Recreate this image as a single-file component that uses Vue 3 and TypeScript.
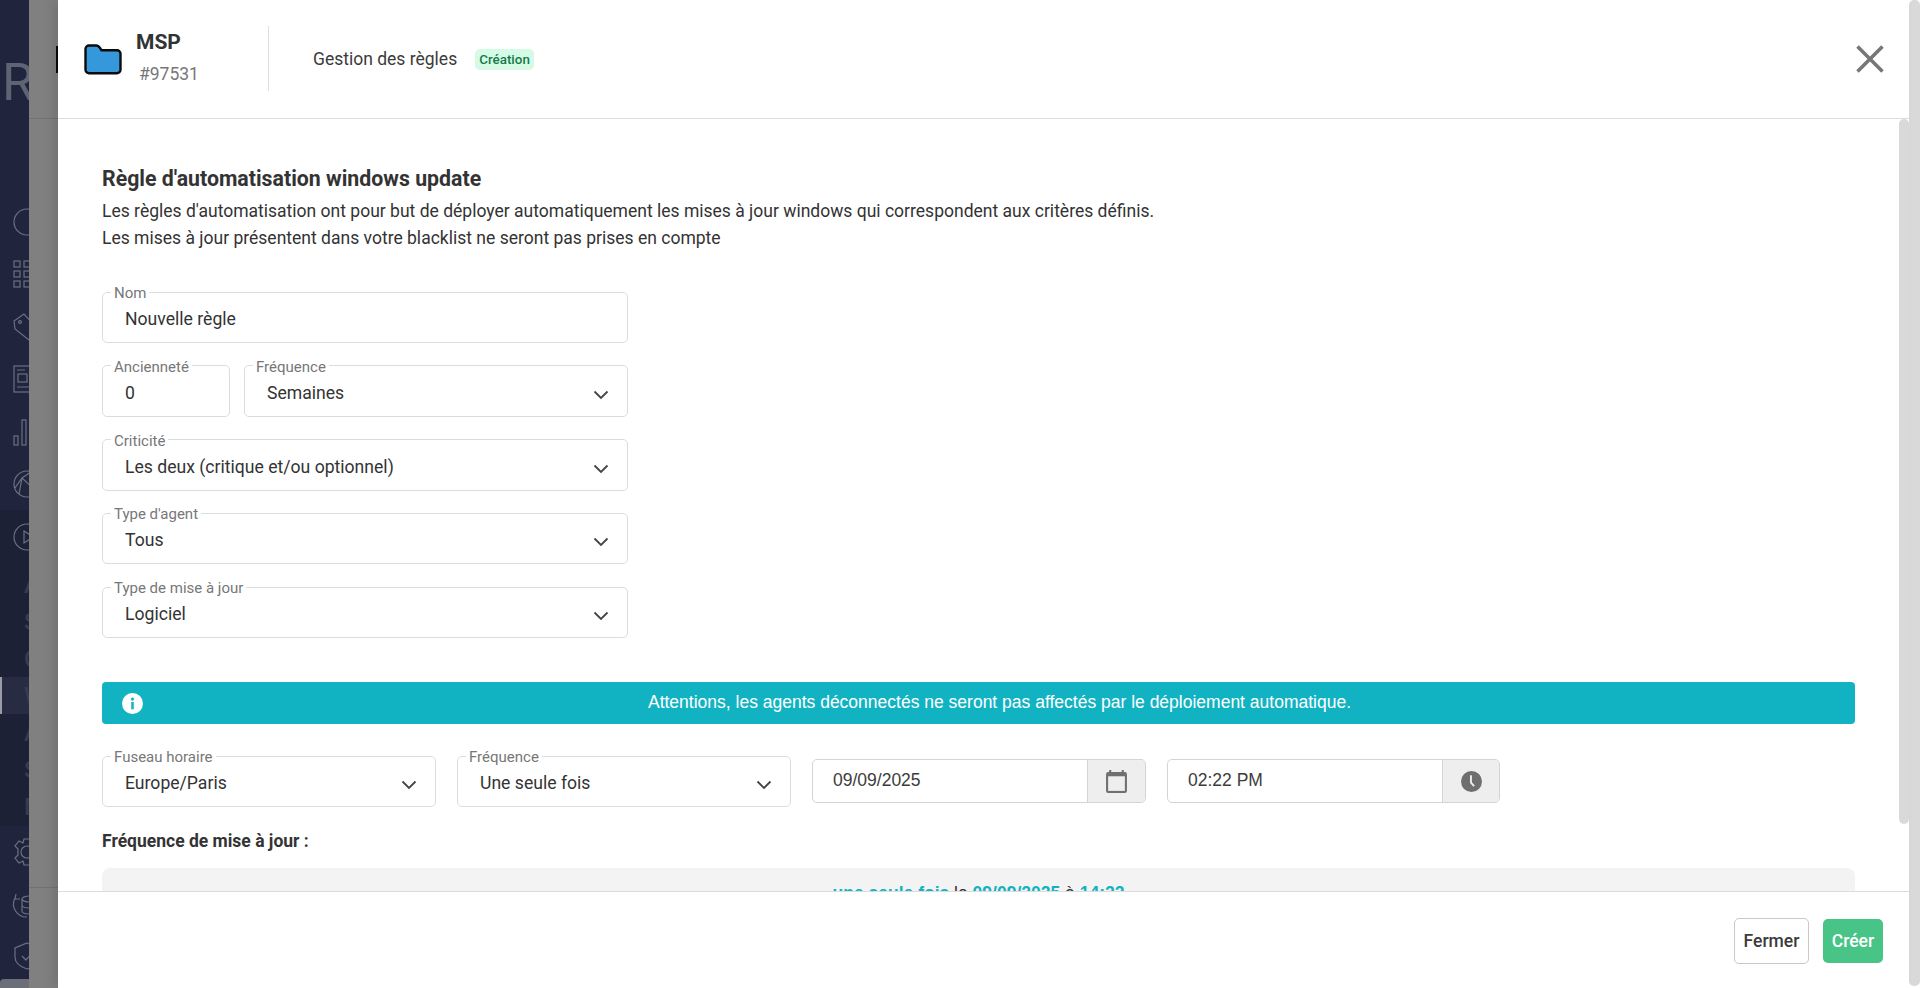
<script setup lang="ts">
interface Field {
  label: string
  value: string
  select: boolean
}

const stacked: Field[] = [
  { label: 'Criticité', value: 'Les deux (critique et/ou optionnel)', select: true },
  { label: "Type d'agent", value: 'Tous', select: true },
  { label: 'Type de mise à jour', value: 'Logiciel', select: true },
]

const sideLetters = ['A', 'S', 'C', 'W', 'A', 'S', 'M']
</script>

<template>
  <div class="screen">
    <aside class="side">
      <div class="logo">R</div>
      <div class="top-group">
        <svg class="ico" viewBox="0 0 28 28"><circle cx="14" cy="14" r="13" /></svg>
        <svg class="ico" viewBox="0 0 28 28">
          <rect x="1" y="1" width="6" height="6" /><rect x="11" y="1" width="6" height="6" /><rect x="21" y="1" width="6" height="6" />
          <rect x="1" y="11" width="6" height="6" /><rect x="11" y="11" width="6" height="6" /><rect x="21" y="11" width="6" height="6" />
          <rect x="1" y="21" width="6" height="6" /><rect x="11" y="21" width="6" height="6" /><rect x="21" y="21" width="6" height="6" />
        </svg>
        <svg class="ico" viewBox="0 0 28 28"><path d="M1 8 L11 1 L27 18 L16 27 L2 16 Z" /><circle cx="7" cy="9" r="1.4" /></svg>
        <svg class="ico" viewBox="0 0 28 28"><rect x="1" y="1" width="26" height="26" /><path d="M4 5h8M4 22h20" /><rect x="5" y="9" width="9" height="8" /></svg>
        <svg class="ico" viewBox="0 0 28 28"><rect x="1" y="18" width="4" height="9" /><rect x="9" y="2" width="4" height="25" /><rect x="17" y="12" width="4" height="15" /></svg>
        <svg class="ico" viewBox="0 0 28 28"><circle cx="14" cy="14" r="13" /><path d="M2 18 L9 8 L18 2 M9 8 L24 22 M9 8 L6 24" /></svg>
      </div>
      <div class="mid-group">
        <svg class="ico play" viewBox="0 0 28 28"><circle cx="14" cy="14" r="13" /><path d="M11 8 L20 14 L11 20 Z" /></svg>
        <div v-for="(letter, i) in sideLetters" :key="i" class="side-item" :class="{ active: i === 3 }">
          <span>{{ letter }}</span>
        </div>
      </div>
      <div class="bottom-group">
        <svg class="ico" viewBox="0 0 28 28"><path d="M11 1 h6 l1 4 4-2 4 5-3 3 v6 l3 3-4 5-4-2-1 4 h-6 l-1-4-4 2-4-5 3-3 v-6 l-3-3 4-5 4 2 Z" /><circle cx="14" cy="14" r="6" /></svg>
        <svg class="ico" viewBox="0 0 28 28"><path d="M2 8 A13 13 0 0 0 14 27 M3 4 L2 9 L7 9" /><ellipse cx="17" cy="9" rx="8" ry="3" /><path d="M9 9v12c0 4 16 4 16 0V9M9 15c0 4 16 4 16 0" /></svg>
        <svg class="ico" viewBox="0 0 28 28"><path d="M14 1 L26 6 V15 C26 21 20 25 14 27 C8 25 2 21 2 15 V6 Z" /><path d="M9 14 L13 18 L20 10" /></svg>
      </div>
      <div class="side-pill"></div>
    </aside>

    <div class="overlay">
      <span class="ghost-line top"></span>
      <span class="ghost-line bottom"></span>
      <span class="ghost-mark"></span>
    </div>

    <section class="modal">
      <header class="modal-head">
        <div class="identity">
          <svg class="folder" viewBox="0 0 38 32">
            <path d="M1.5 6 a3.5 3.5 0 0 1 3.5-3.5 h7.5 c2 0 2.5 1 3.5 2.5 l1.5 2.2 h15.5 a3.5 3.5 0 0 1 3.5 3.5 v16 a3.5 3.5 0 0 1-3.5 3.5 h-28 a3.5 3.5 0 0 1-3.5-3.5 Z" fill="#3498db" stroke="#0a0a0a" stroke-width="2.4" stroke-linejoin="round" />
          </svg>
          <div class="names">
            <div class="name">MSP</div>
            <div class="ref">#97531</div>
          </div>
        </div>
        <div class="crumb">
          <span>Gestion des règles</span>
          <span class="badge">Création</span>
        </div>
        <button class="close" aria-label="Fermer">
          <svg viewBox="0 0 28 28" width="28" height="28"><path d="M1.5 1.5 L26.5 26.5 M26.5 1.5 L1.5 26.5" /></svg>
        </button>
      </header>

      <div class="modal-main">
        <div class="content">
          <div class="content-inner">
            <h2 class="title">Règle d'automatisation windows update</h2>
            <p class="desc">Les règles d'automatisation ont pour but de déployer automatiquement les mises à jour windows qui correspondent aux critères définis.<br />Les mises à jour présentent dans votre blacklist ne seront pas prises en compte</p>

            <div class="form-col">
              <fieldset class="field">
                <legend>Nom</legend>
                <span class="val">Nouvelle règle</span>
              </fieldset>

              <div class="pair">
                <fieldset class="field short">
                  <legend>Ancienneté</legend>
                  <span class="val">0</span>
                </fieldset>
                <fieldset class="field grow">
                  <legend>Fréquence</legend>
                  <span class="val">Semaines</span>
                  <svg class="chev" viewBox="0 0 16 10"><path d="M1.5 1.5 L8 8 L14.5 1.5" /></svg>
                </fieldset>
              </div>

              <fieldset v-for="f in stacked" :key="f.label" class="field">
                <legend>{{ f.label }}</legend>
                <span class="val">{{ f.value }}</span>
                <svg v-if="f.select" class="chev" viewBox="0 0 16 10"><path d="M1.5 1.5 L8 8 L14.5 1.5" /></svg>
              </fieldset>
            </div>

            <div class="alert">
              <svg class="alert-ico" viewBox="0 0 20 20">
                <circle cx="10" cy="10" r="10" fill="#fff" />
                <rect x="8.8" y="8.5" width="2.4" height="7" fill="#11b3c3" />
                <circle cx="10" cy="5.8" r="1.5" fill="#11b3c3" />
              </svg>
              <span>Attentions, les agents déconnectés ne seront pas affectés par le déploiement automatique.</span>
            </div>

            <div class="schedule">
              <fieldset class="field sched-sel">
                <legend>Fuseau horaire</legend>
                <span class="val">Europe/Paris</span>
                <svg class="chev" viewBox="0 0 16 10"><path d="M1.5 1.5 L8 8 L14.5 1.5" /></svg>
              </fieldset>
              <fieldset class="field sched-sel">
                <legend>Fréquence</legend>
                <span class="val">Une seule fois</span>
                <svg class="chev" viewBox="0 0 16 10"><path d="M1.5 1.5 L8 8 L14.5 1.5" /></svg>
              </fieldset>
              <div class="picker date">
                <span class="pick-val">09/09/2025</span>
                <span class="addon">
                  <svg viewBox="0 0 20 22" width="21" height="23">
                    <path fill="#6f6f6f" d="M3 0h2v2h10V0h2v2h1a2 2 0 0 1 2 2v16a2 2 0 0 1-2 2H2a2 2 0 0 1-2-2V4a2 2 0 0 1 2-2h1z" />
                    <rect x="2" y="6" width="16" height="14" fill="#eee" />
                  </svg>
                </span>
              </div>
              <div class="picker time">
                <span class="pick-val">02:22 PM</span>
                <span class="addon">
                  <svg viewBox="0 0 20 20" width="21" height="21">
                    <circle cx="10" cy="10" r="10" fill="#6f6f6f" />
                    <path d="M9.5 4 V11 L12.5 14.5" fill="none" stroke="#eee" stroke-width="1.8" />
                  </svg>
                </span>
              </div>
            </div>

            <h3 class="sub">Fréquence de mise à jour :</h3>
            <div class="recap">
              <b>une seule fois</b> le <b>09/09/2025</b> à <b>14:22</b>
            </div>
          </div>
          <div class="inner-thumb"></div>
        </div>

        <footer class="modal-foot">
          <button class="btn ghost">Fermer</button>
          <button class="btn primary">Créer</button>
        </footer>
      </div>
    </section>

    <div class="outer-thumb"></div>
  </div>
</template>

<style>
html, body { margin: 0; padding: 0; height: 100%; overflow: hidden; background: #fff; }
</style>

<style scoped>
* { box-sizing: border-box; }

.screen {
  position: relative;
  width: 1920px;
  height: 988px;
  overflow: hidden;
  display: flex;
  font-family: Roboto, "Liberation Sans", sans-serif;
  color: #343434;
  background: #fff;
}

/* dimmed page behind the modal */
.side {
  width: 29px;
  height: 988px;
  flex: none;
  position: relative;
  overflow: hidden;
  background: #20253d;
  display: flex;
  flex-direction: column;
}
.logo {
  height: 118px;
  padding: 58px 0 0 2px;
  font: 400 52px/50px Roboto, sans-serif;
  color: #5f6474;
  flex: none;
}
.ico {
  width: 28px;
  height: 28px;
  margin-left: 13px;
  flex: none;
  display: block;
  fill: none;
  stroke: #6c7080;
  stroke-width: 1.2;
  overflow: visible;
}
.top-group {
  height: 392px;
  padding-top: 90px;
  display: flex;
  flex-direction: column;
  gap: 24.4px;
  flex: none;
}
.mid-group {
  height: 316px;
  background: #1d2136;
  flex: none;
  padding-top: 13px;
}
.play { margin-bottom: 15px; }
.side-item {
  height: 37px;
  padding-left: 24px;
  font: 500 24px/36px Roboto, sans-serif;
  color: #373b50;
  display: flex;
  align-items: center;
}
.side-item.active {
  background: #282c43;
  box-shadow: inset 2px 0 0 #9b9ca6;
}
.bottom-group {
  padding-top: 12px;
  display: flex;
  flex-direction: column;
  gap: 24px;
}
.side-pill {
  position: absolute;
  left: 0;
  right: 0;
  bottom: 0;
  height: 9px;
  background: #6d6f78;
  border-radius: 4px 0 0 0;
}

.overlay {
  width: 29px;
  height: 988px;
  flex: none;
  position: relative;
  background: #808080;
}
.ghost-line { position: absolute; left: 0; right: 0; height: 1px; background: #737373; }
.ghost-line.top { top: 118px; }
.ghost-line.bottom { top: 887px; }
.ghost-mark {
  position: absolute;
  right: 0;
  top: 46px;
  width: 2px;
  height: 27px;
  background: #0a0a0a;
}

.modal {
  flex: 1;
  min-width: 0;
  height: 988px;
  background: #fff;
  display: flex;
  flex-direction: column;
  box-shadow: -6px 0 10px rgba(0, 0, 0, 0.1);
  z-index: 1;
  margin-right: 11px;
}
.modal-head {
  height: 119px;
  flex: none;
  display: flex;
  align-items: center;
  border-bottom: 1px solid #dcdcdc;
  position: relative;
}
.identity {
  width: 211px;
  height: 65px;
  margin-top: -1px;
  border-right: 1px solid #dedede;
  display: flex;
  align-items: center;
  padding-left: 26px;
  flex: none;
}
.folder { width: 38px; height: 32px; flex: none; }
.names { margin-left: 14px; }
.name { font-size: 21px; font-weight: 700; line-height: 26px; margin-top: -3px; color: #333; }
.ref { font-size: 17.5px; color: #777; line-height: 22px; margin: 8px 0 0 3px; }
.crumb {
  margin-left: 44px;
  display: flex;
  align-items: center;
  font-size: 17.5px;
  color: #3b3b3b;
  gap: 18px;
  margin-top: -1px;
}
.badge {
  height: 21px;
  padding: 0 4px;
  margin-top: 1px;
  background: #d5fbe7;
  color: #167a48;
  font-size: 13.4px;
  font-weight: 500;
  line-height: 21px;
  border-radius: 5px;
}
.close {
  margin-left: auto;
  margin-right: 25px;
  width: 28px;
  height: 28px;
  margin-top: 0;
  padding: 0;
  border: 0;
  background: none;
}
.close svg { display: block; }
.close path { stroke: #777; stroke-width: 3.6; fill: none; }

.modal-main {
  flex: 1;
  min-height: 0;
  display: flex;
  flex-direction: column;
}
.content {
  flex: 1;
  min-height: 0;
  overflow: hidden;
  position: relative;
}
.content-inner {
  padding: 48px 54px 0 44px;
}
.title {
  margin: 0;
  font-size: 21.3px;
  line-height: 24px;
  font-weight: 700;
  color: #333;
}
.desc {
  margin: 7px 0 0;
  font-size: 17.52px;
  line-height: 27px;
  color: #333;
}
.form-col {
  width: 526px;
  margin-top: 31px;
  display: flex;
  flex-direction: column;
  gap: 13.75px;
}
.pair { display: flex; gap: 14px; }
.field {
  position: relative;
  margin: 0;
  padding: 0 22px;
  height: 60px;
  border: 1px solid #dcdcdc;
  border-radius: 5px;
  min-width: 0;
  display: block;
}
.field legend {
  padding: 2px 3px 0;
  font-size: 15px;
  line-height: 16px;
  color: #777;
  margin-left: -14px;
}
.short { width: 128px; flex: none; }
.grow { flex: 1; }
.val {
  display: block;
  font-size: 17.6px;
  line-height: 24px;
  color: #333;
  margin-top: 6px;
}
.chev {
  position: absolute;
  right: 18px;
  top: 15px;
  width: 16px;
  height: 10px;
  fill: none;
  stroke: #444;
  stroke-width: 1.8;
}

.alert {
  margin-top: 44px;
  height: 42px;
  padding: 0 0 2px 42px;
  background: #11b3c3;
  border-radius: 4px;
  color: #fff;
  font-family: "Liberation Sans", Arial, sans-serif;
  font-size: 17.5px;
  display: flex;
  align-items: center;
  justify-content: center;
  position: relative;
}
.alert-ico {
  position: absolute;
  left: 20px;
  top: 10.5px;
  width: 21px;
  height: 21px;
}

.schedule {
  margin-top: 23px;
  display: flex;
  align-items: center;
  gap: 21px;
}
.sched-sel { width: 334px; flex: none; margin-top: 0; }
.picker {
  flex: none;
  margin-top: 8px;
  height: 44px;
  width: 334px;
  border: 1px solid #d4d4d4;
  border-radius: 5px;
  display: flex;
  align-items: stretch;
  overflow: hidden;
  font-family: "Liberation Sans", Arial, sans-serif;
  font-size: 17.5px;
  color: #3c3c3c;
}
.pick-val { flex: 1; padding-left: 20px; line-height: 40px; }
.addon {
  width: 58px;
  flex: none;
  background: #eee;
  border-left: 1px solid #d4d4d4;
  display: flex;
  align-items: center;
  justify-content: center;
}
.time { width: 333px; }
.time .addon { width: 57px; }

.sub {
  margin: 22px 0 0;
  font-size: 17.5px;
  line-height: 24px;
  font-weight: 700;
  color: #333;
}
.recap {
  margin-top: 15px;
  height: 70px;
  padding-top: 14.5px;
  background: #f3f3f3;
  border-radius: 8px;
  text-align: center;
  font-family: "Liberation Sans", Arial, sans-serif;
  font-size: 17.5px;
  color: #333;
}
.recap b { color: #11b3c3; }

.inner-thumb {
  position: absolute;
  right: 0;
  top: 0;
  width: 10px;
  height: 705px;
  background: #d9d9d9;
  border-radius: 5px;
}

.modal-foot {
  height: 97px;
  flex: none;
  border-top: 1px solid #dcdcdc;
  display: flex;
  justify-content: flex-end;
  align-items: center;
  gap: 14px;
  padding-right: 26px;
  background: #fff;
  padding-top: 2px;
}
.btn {
  font-family: Roboto, sans-serif;
  font-size: 17.5px;
  font-weight: 500;
  border-radius: 5px;
  padding: 0;
}
.ghost {
  width: 75px;
  height: 46px;
  background: #fff;
  color: #3c3c3c;
  border: 1px solid #c9c9c9;
}
.primary {
  width: 60px;
  height: 44px;
  background: #48c486;
  color: #fff;
  border: 0;
}

.outer-thumb {
  position: absolute;
  right: 0;
  top: 0;
  width: 11px;
  height: 986px;
  background: #d9d9d9;
  border-radius: 5px;
}
</style>
